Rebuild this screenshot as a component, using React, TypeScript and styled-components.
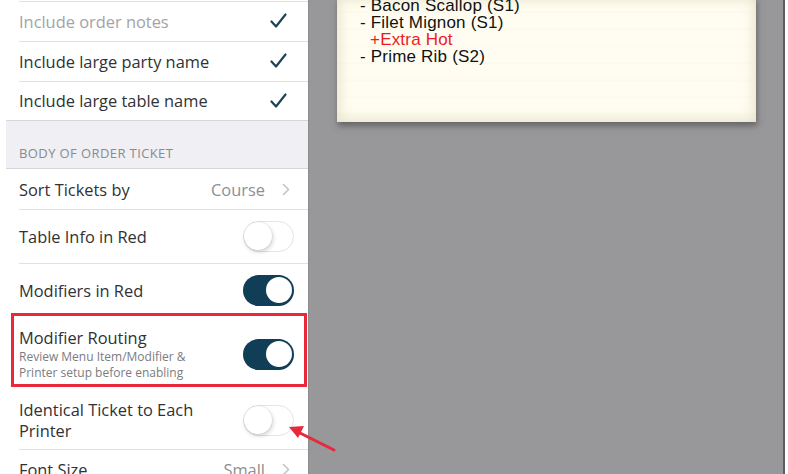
import React from "react";
import styled, { createGlobalStyle } from "styled-components";

const GlobalStyle = createGlobalStyle`
  html, body {
    margin: 0;
    padding: 0;
    background: #ffffff;
  }
  body {
    font-family: "Open Sans", Lato, sans-serif;
  }
`;

const Page = styled.div`
  position: relative;
  width: 788px;
  height: 474px;
  display: flex;
  overflow: hidden;
  background: #ffffff;
  padding-left: 6px;
  padding-right: 3px;
  box-sizing: border-box;
`;

const Panel = styled.div`
  width: 302px;
  flex-shrink: 0;
  background: #ffffff;
  display: flex;
  flex-direction: column;
  padding-top: 1px;
`;

const Row = styled.div<{ $h: number; $line?: "inset" | "full" | "none" }>`
  position: relative;
  height: ${({ $h }) => $h}px;
  flex-shrink: 0;
  display: flex;
  align-items: center;
  justify-content: space-between;
  padding: 0 14px 0 13px;
  box-sizing: border-box;
  &::before {
    content: "";
    position: absolute;
    top: 0;
    left: ${({ $line }) => ($line === "full" ? "0" : "13px")};
    right: 0;
    height: 1px;
    background: ${({ $line }) => ($line === "none" ? "transparent" : "#e1e1e4")};
  }
`;

const Highlighted = styled(Row)`
  &::after {
    content: "";
    position: absolute;
    top: -4px;
    left: 5px;
    right: 1px;
    bottom: 4px;
    border: 3px solid #e8293b;
    pointer-events: none;
  }
`;

const Label = styled.div<{ $muted?: boolean }>`
  font-size: 16.4px;
  line-height: 21px;
  color: ${({ $muted }) => ($muted ? "#a3a3a6" : "#303236")};
  max-width: 205px;
`;

const Sub = styled.div`
  font-size: 12px;
  line-height: 16px;
  color: #7b7c80;
  margin-top: 1px;
`;

const SectionHeader = styled.div`
  height: 49px;
  flex-shrink: 0;
  background: #efeff4;
  border-top: 1px solid #d6d6da;
  border-bottom: 1px solid #d6d6da;
  box-sizing: border-box;
  display: flex;
  align-items: flex-end;
  padding: 0 13px 6px;
  font-size: 13px;
  letter-spacing: 0.4px;
  color: #8a8a8f;
`;

const Check = styled.svg`
  width: 17px;
  height: 16px;
  margin-right: 7px;
`;

const Value = styled.div`
  display: flex;
  align-items: center;
  gap: 17px;
  font-size: 16.4px;
  color: #8e8e93;
  margin-right: 4px;
`;

const Toggle = styled.div<{ $on?: boolean }>`
  position: relative;
  width: 51px;
  height: 31px;
  border-radius: 16px;
  box-sizing: border-box;
  background: ${({ $on }) => ($on ? "#0f3e56" : "#ffffff")};
  border: ${({ $on }) => ($on ? "none" : "1.5px solid #e4e4e6")};
  &::after {
    content: "";
    position: absolute;
    top: ${({ $on }) => ($on ? "2.5px" : "0")};
    ${({ $on }) => ($on ? "right: 2.5px;" : "left: 0;")}
    width: ${({ $on }) => ($on ? "26px" : "28px")};
    height: ${({ $on }) => ($on ? "26px" : "28px")};
    border-radius: 50%;
    background: #ffffff;
    box-shadow: ${({ $on }) =>
      $on ? "none" : "1px 2px 4px rgba(0,0,0,0.18), 0 0 0 0.5px rgba(0,0,0,0.08)"};
  }
`;

const Stage = styled.div`
  flex: 1;
  background: #98989a;
  border-left: 1px solid #8c8c8e;
  border-right: 2px solid #5e5e60;
  padding-left: 28px;
  padding-right: 27px;
`;

const Paper = styled.div`
  height: 125px;
  background: repeating-linear-gradient(
      180deg,
      rgba(250, 246, 224, 0) 0px,
      rgba(250, 246, 224, 0) 14px,
      rgba(246, 242, 220, 0.35) 15px,
      rgba(250, 246, 224, 0) 17px
    ),
    #fffdf1;
  box-shadow: inset 0 0 14px rgba(215, 208, 175, 0.8), 1px 4px 6px rgba(60, 60, 60, 0.55);
  padding-left: 23px;
  font-family: "Liberation Sans", Arial, sans-serif;
  font-size: 17px;
  letter-spacing: 0.2px;
  line-height: 17px;
  color: #111111;
`;

const Lines = styled.div`
  margin-top: -3px;
`;

const Line = styled.div<{ $mod?: boolean }>`
  color: ${({ $mod }) => ($mod ? "#ee1b24" : "#111111")};
  padding-left: ${({ $mod }) => ($mod ? "10px" : "0")};
`;

const Arrow = styled.svg`
  position: absolute;
  left: 284px;
  top: 420px;
  width: 56px;
  height: 36px;
`;

const CheckIcon = () => (
  <Check viewBox="0 0 17 16">
    <path d="M1.5 8.5 L6 13.5 L15.5 1.5" fill="none" stroke="#1c4356" strokeWidth="2.2" strokeLinecap="round" strokeLinejoin="round" />
  </Check>
);

const Chevron = () => (
  <svg width="8" height="13" viewBox="0 0 8 13">
    <path d="M1.5 1.5 L6.5 6.5 L1.5 11.5" fill="none" stroke="#c4c4c8" strokeWidth="1.6" strokeLinecap="round" strokeLinejoin="round" />
  </svg>
);

const App = () => {
  return (
    <>
      <GlobalStyle />
      <Page>
        <Panel>
          <Row $h={40}>
            <Label $muted>Include order notes</Label>
            <CheckIcon />
          </Row>
          <Row $h={40}>
            <Label>Include large party name</Label>
            <CheckIcon />
          </Row>
          <Row $h={39}>
            <Label>Include large table name</Label>
            <CheckIcon />
          </Row>
          <SectionHeader>BODY OF ORDER TICKET</SectionHeader>
          <Row $h={40} $line="none">
            <Label>Sort Tickets by</Label>
            <Value>
              Course
              <Chevron />
            </Value>
          </Row>
          <Row $h={54}>
            <Label>Table Info in Red</Label>
            <Toggle />
          </Row>
          <Row $h={54}>
            <Label>Modifiers in Red</Label>
            <Toggle $on />
          </Row>
          <Highlighted $h={74} $line="none">
            <div>
              <Label>Modifier Routing</Label>
              <Sub>
                Review Menu Item/Modifier &amp;
                <br />
                Printer setup before enabling
              </Sub>
            </div>
            <Toggle $on />
          </Highlighted>
          <Row $h={58} $line="none">
            <Label>Identical Ticket to Each Printer</Label>
            <Toggle />
          </Row>
          <Row $h={40}>
            <Label>Font Size</Label>
            <Value>
              Small
              <Chevron />
            </Value>
          </Row>
        </Panel>
        <Stage>
          <Paper>
            <Lines>
              <Line>- Bacon Scallop (S1)</Line>
              <Line>- Filet Mignon (S1)</Line>
              <Line $mod>+Extra Hot</Line>
              <Line>- Prime Rib (S2)</Line>
            </Lines>
          </Paper>
        </Stage>
        <Arrow viewBox="0 0 56 36">
          <line x1="50" y1="30" x2="14" y2="12" stroke="#e8293b" strokeWidth="3" strokeLinecap="round" />
          <polygon points="5,7 20,6 14,18" fill="#e8293b" />
        </Arrow>
      </Page>
    </>
  );
};

export default App;
